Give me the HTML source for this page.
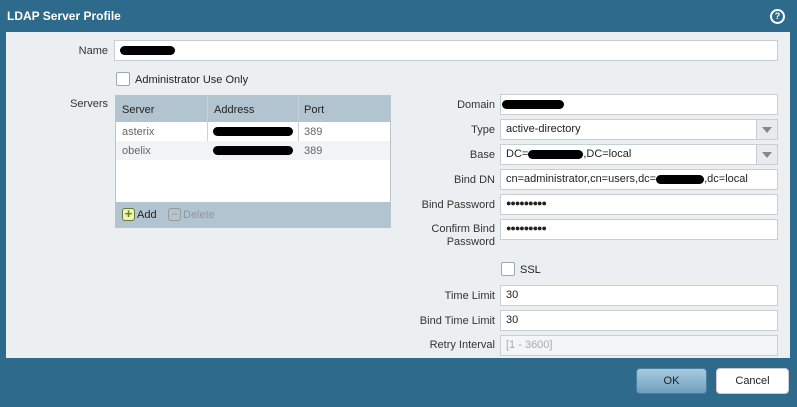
<!DOCTYPE html>
<html><head><style>
*{box-sizing:border-box;margin:0;padding:0}
body{width:797px;height:407px;background:#2e6a8b;font-family:"Liberation Sans",sans-serif;font-size:11px;color:#222;position:relative;overflow:hidden}
.a{position:absolute}
.title{left:7px;top:9px;color:#fff;font-weight:bold;font-size:12px}
.panel{left:6px;top:32px;width:784px;height:326px;background:#eceff1}
.lbl{position:absolute;text-align:right;width:200px;font-size:11px;color:#333}
.in{position:absolute;background:#fff;border:1px solid #c9ced2;height:21px;padding:3px 5px;font-size:11px;white-space:nowrap}
.blk{display:inline-block;background:#000;border-radius:6px;height:9px;vertical-align:middle}
.cb{position:absolute;width:14px;height:14px;border:1px solid #9aa;background:#fff;border-radius:2px}
.dd{position:absolute;right:0;top:0;width:21px;height:19px;background:#e8ebed;border-left:1px solid #ccc}
.dd:after{content:"";position:absolute;left:5px;top:7px;border-left:5px solid transparent;border-right:5px solid transparent;border-top:6px solid #888}
.btn{position:absolute;border-radius:4px;text-align:center;line-height:25px;font-size:11px}
</style></head><body>
<div class="a title">LDAP Server Profile</div>
<div class="a" style="left:770px;top:9px;width:15px;height:15px;border:2px solid #fff;border-radius:50%;color:#fff;font-size:9px;font-weight:bold;text-align:center;line-height:11px">?</div>
<div class="a panel"></div>

<div class="lbl" style="left:-92px;top:45px">Name</div>
<div class="in" style="left:114px;top:40px;width:664px"><span class="blk" style="width:55px"></span></div>
<div class="cb" style="left:116px;top:72px"></div>
<div class="a" style="left:135px;top:74px">Administrator Use Only</div>
<div class="lbl" style="left:-92px;top:98px">Servers</div>

<div class="a" style="left:115px;top:95px;width:276px;height:133px;background:#fff;border:1px solid #b9c4cc">
 <div class="a" style="left:0;top:0;width:274px;height:26px;background:#b3c4d1"></div>
 <div class="a" style="left:91px;top:0;width:1px;height:64px;background:#c9d2d8"></div>
 <div class="a" style="left:182px;top:0;width:1px;height:64px;background:#c9d2d8"></div>
 <div class="a" style="left:6px;top:8px">Server</div>
 <div class="a" style="left:98px;top:8px">Address</div>
 <div class="a" style="left:188px;top:8px">Port</div>
 <div class="a" style="left:0;top:45px;width:274px;height:19px;background:#f1f3f4"></div>
 <div class="a" style="left:6px;top:30px;color:#666">asterix</div>
 <div class="a" style="left:6px;top:49px;color:#666">obelix</div>
 <span class="a blk" style="left:97px;top:31px;width:80px"></span>
 <span class="a blk" style="left:97px;top:50px;width:80px"></span>
 <div class="a" style="left:188px;top:30px;color:#666">389</div>
 <div class="a" style="left:188px;top:49px;color:#666">389</div>
 <div class="a" style="left:0;top:106px;width:274px;height:25px;background:#b3c4d1"></div>
 <div class="a" style="left:6px;top:112px;width:13px;height:13px;border:1px solid #6a7a30;background:#eef0c0;border-radius:3px;font-size:13px;line-height:10px;text-align:center;color:#5a8a00;font-weight:bold">+</div>
 <div class="a" style="left:21px;top:113px">Add</div>
 <div class="a" style="left:52px;top:112px;width:13px;height:13px;border:1px solid #999;border-radius:3px;font-size:12px;line-height:10px;text-align:center;color:#999">−</div>
 <div class="a" style="left:67px;top:113px;color:#8a97a0">Delete</div>
</div>

<div class="lbl" style="left:295px;top:99px">Domain</div>
<div class="in" style="left:500px;top:94px;width:278px"><span class="blk" style="width:62px;margin-left:-4px"></span></div>
<div class="lbl" style="left:295px;top:124px">Type</div>
<div class="in" style="left:500px;top:119px;width:278px">active-directory<div class="dd"></div></div>
<div class="lbl" style="left:295px;top:149px">Base</div>
<div class="in" style="left:500px;top:144px;width:278px">DC=<span class="blk" style="width:55px"></span>,DC=local<div class="dd"></div></div>
<div class="lbl" style="left:295px;top:174px">Bind DN</div>
<div class="in" style="left:500px;top:169px;width:278px">cn=administrator,cn=users,dc=<span class="blk" style="width:48px"></span>,dc=local</div>
<div class="lbl" style="left:295px;top:199px">Bind Password</div>
<div class="in" style="left:500px;top:194px;width:278px;font-size:9px;letter-spacing:-1px">●●●●●●●●●</div>
<div class="lbl" style="left:295px;top:223px;line-height:13px">Confirm Bind<br>Password</div>
<div class="in" style="left:500px;top:219px;width:278px;font-size:9px;letter-spacing:-1px">●●●●●●●●●</div>
<div class="cb" style="left:501px;top:262px"></div>
<div class="a" style="left:520px;top:264px">SSL</div>
<div class="lbl" style="left:295px;top:290px">Time Limit</div>
<div class="in" style="left:500px;top:285px;width:278px">30</div>
<div class="lbl" style="left:295px;top:315px">Bind Time Limit</div>
<div class="in" style="left:500px;top:310px;width:278px">30</div>
<div class="lbl" style="left:295px;top:339px">Retry Interval</div>
<div class="in" style="left:500px;top:335px;width:278px;color:#aaa;background:#f4f5f6">[1 - 3600]</div>

<div class="btn" style="left:636px;top:368px;width:71px;height:26px;background:linear-gradient(#a9cbe0,#6f9fbf);border:1px solid #4f7f9f">OK</div>
<div class="btn" style="left:716px;top:368px;width:73px;height:26px;background:#fff;border:1px solid #ccc">Cancel</div>
</body></html>
